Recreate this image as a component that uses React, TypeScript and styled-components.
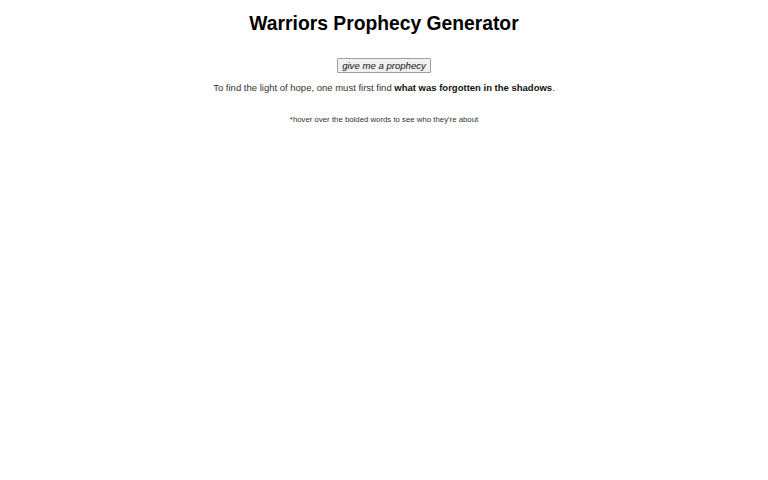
import styled, { createGlobalStyle } from "styled-components";

const GlobalStyle = createGlobalStyle`
  body {
    margin: 0;
    background: #ffffff;
    font-family: "Liberation Sans", Arial, sans-serif;
    color: #000000;
  }
`;

const Page = styled.div`
  display: flex;
  flex-direction: column;
  align-items: center;
  padding-top: 13px;
  text-align: center;
`;

const Title = styled.h1`
  margin: 0;
  font-size: 19.3px;
  font-weight: 700;
  line-height: 22px;
`;

const ProphecyButton = styled.button`
  margin-top: 23px;
  padding: 1px 4px;
  font-family: "Liberation Sans", Arial, sans-serif;
  font-size: 9.6px;
  font-style: italic;
  line-height: 11px;
  color: #111;
  background: #f0f0f0;
  border: 1px solid #a0a0a0;
  border-radius: 1px;
`;

const Prophecy = styled.p`
  margin: 9px 0 0;
  font-size: 9.5px;
  line-height: 11px;
  color: #333;
`;

const Bold = styled.b`
  font-weight: 700;
  color: #111;
`;

const Note = styled.p`
  margin: 22px 0 0;
  font-size: 7.8px;
  line-height: 9px;
  color: #333;
`;

export default function App() {
  return (
    <>
      <GlobalStyle />
      <Page>
        <Title>Warriors Prophecy Generator</Title>
        <ProphecyButton>give me a prophecy</ProphecyButton>
        <Prophecy>
          To find the light of hope, one must first find{" "}
          <Bold>what was forgotten in the shadows</Bold>.
        </Prophecy>
        <Note>*hover over the bolded words to see who they're about</Note>
      </Page>
    </>
  );
}
